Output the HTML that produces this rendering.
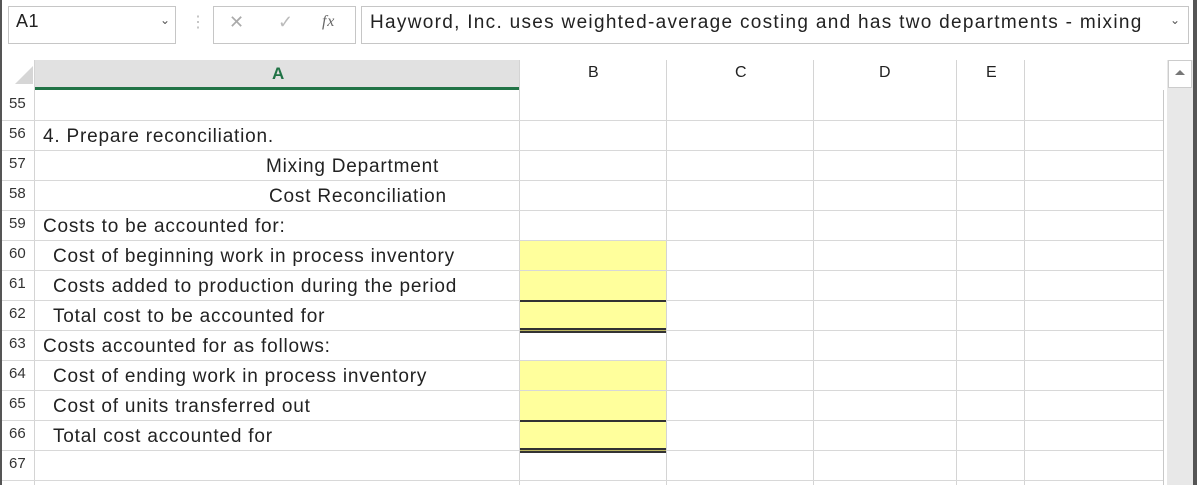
<!DOCTYPE html>
<html><head><style>
*{margin:0;padding:0;box-sizing:border-box}
body{width:1197px;height:485px;background:#fff;position:relative;overflow:hidden;font-family:"Liberation Sans",sans-serif;color:#222}
.a{position:absolute}
.tb{background:#fff;border:1px solid #c6c6c6}
.t{position:absolute;font-size:19px;letter-spacing:0.8px;white-space:nowrap}
.rn{position:absolute;left:0;width:34px;font-size:15px;color:#333;padding-left:9px}
</style></head><body>
<div class="a" style="left:0;top:0;width:2px;height:485px;background:#555"></div>
<div class="a" style="right:0;top:0;width:4px;height:485px;background:#555"></div>
<div class="a tb" style="left:8px;top:6px;width:168px;height:38px"></div>
<div class="t" style="left:16px;top:11px;font-size:18px;letter-spacing:0.5px">A1</div>
<div class="t" style="left:160px;top:13px;font-size:12px;color:#555">&#8964;</div>
<div class="t" style="left:190px;top:12px;font-size:16px;color:#bbb">&#8942;</div>
<div class="a tb" style="left:213px;top:6px;width:143px;height:38px"></div>
<div class="t" style="left:229px;top:12px;font-size:18px;color:#aaa">&#10005;</div>
<div class="t" style="left:278px;top:12px;font-size:18px;color:#bbb">&#10003;</div>
<div class="t" style="left:322px;top:13px;font-size:16px;font-style:italic;font-family:'Liberation Serif',serif;color:#666">fx</div>
<div class="a tb" style="left:361px;top:6px;width:828px;height:38px"></div>
<div class="t" style="left:370px;top:12px;font-size:19px;letter-spacing:1.3px">Hayword, Inc. uses weighted-average costing and has two departments - mixing</div>
<div class="t" style="left:1170px;top:13px;font-size:12px;color:#555">&#8964;</div>
<div class="a" style="left:15px;top:66px;width:0;height:0;border-left:18px solid transparent;border-bottom:18px solid #d6d6d6"></div>
<div class="a" style="left:35px;top:60px;width:484px;height:30px;background:#e1e1e1;border-bottom:3px solid #217346"></div>
<div class="t" style="left:272px;top:64px;font-size:17px;color:#217346;font-weight:bold">A</div>
<div class="t" style="left:588px;top:64px;font-size:16px">B</div>
<div class="t" style="left:735px;top:64px;font-size:16px">C</div>
<div class="t" style="left:879px;top:64px;font-size:16px">D</div>
<div class="t" style="left:986px;top:64px;font-size:16px">E</div>
<div class="a" style="left:34px;top:60px;width:1px;height:425px;background:#d4d4d4"></div>
<div class="a" style="left:519px;top:60px;width:1px;height:425px;background:#d4d4d4"></div>
<div class="a" style="left:666px;top:60px;width:1px;height:425px;background:#d4d4d4"></div>
<div class="a" style="left:813px;top:60px;width:1px;height:425px;background:#d4d4d4"></div>
<div class="a" style="left:956px;top:60px;width:1px;height:425px;background:#d4d4d4"></div>
<div class="a" style="left:1024px;top:60px;width:1px;height:425px;background:#d4d4d4"></div>
<div class="a" style="left:1163px;top:90px;width:1px;height:395px;background:#c8c8c8"></div>
<div class="a" style="left:1167px;top:60px;width:26px;height:425px;background:#e8e8e8"></div>
<div class="a" style="left:1168px;top:60px;width:24px;height:28px;background:#fff;border:1px solid #ccc"></div>
<div class="a" style="left:1175px;top:70px;border-left:5px solid transparent;border-right:5px solid transparent;border-bottom:5px solid #777"></div>
<div class="a" style="left:520px;top:241px;width:146px;height:90px;background:#ffff9c"></div>
<div class="a" style="left:520px;top:361px;width:146px;height:90px;background:#ffff9c"></div>
<div id="rows"></div>
<div class="a" style="left:520px;top:300px;width:146px;height:2px;background:#333"></div>
<div class="a" style="left:520px;top:328px;width:146px;height:5px;border-top:2px solid #333;border-bottom:2px solid #333;background:#bbb560"></div>
<div class="a" style="left:520px;top:420px;width:146px;height:2px;background:#333"></div>
<div class="a" style="left:520px;top:448px;width:146px;height:5px;border-top:2px solid #333;border-bottom:2px solid #333;background:#bbb560"></div>
<script>
var h='',labels={56:['4. Prepare reconciliation.',43],57:['Mixing Department',266],58:['Cost Reconciliation',269],59:['Costs to be accounted for:',43],60:['Cost of beginning work in process inventory',53],61:['Costs added to production during the period',53],62:['Total cost to be accounted for',53],63:['Costs accounted for as follows:',43],64:['Cost of ending work in process inventory',53],65:['Cost of units transferred out',53],66:['Total cost accounted for',53]};
for(var i=0;i<13;i++){var y=90+i*30,r=55+i;
h+='<div class="a" style="left:2px;top:'+(y+30)+'px;width:1161px;height:1px;background:#d8d8d8"></div>';
h+='<div class="rn" style="top:'+(y+5)+'px">'+r+'</div>';
if(labels[r])h+='<div class="t" style="left:'+labels[r][1]+'px;top:'+(y+6)+'px">'+labels[r][0]+'</div>';}
document.getElementById('rows').innerHTML=h;
</script>
</body></html>
